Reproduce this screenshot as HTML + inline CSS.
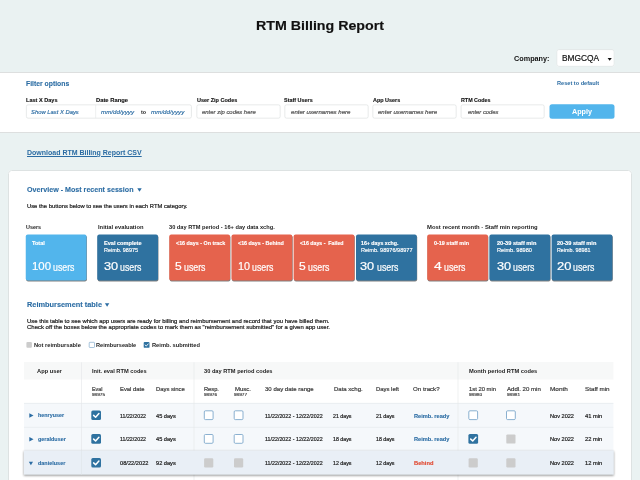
<!DOCTYPE html><html><head><meta charset="utf-8"><title>RTM Billing Report</title><style>
html,body{margin:0;padding:0}
body{width:640px;height:480px;overflow:hidden;position:relative;background:#eaf2f2;font-family:"Liberation Sans",sans-serif}
#r{position:absolute;left:0;top:0;width:640px;height:480px;overflow:hidden;will-change:transform}
#r>svg{position:absolute;left:0;top:0;display:block}
#r>span{position:absolute;white-space:pre;line-height:12px;height:12px;transform-origin:0 50%;display:block}

</style></head><body><div id="r">
<svg width="640" height="480" viewBox="0 0 640 480"><defs><filter id="b1" x="-10%" y="-20%" width="120%" height="140%"><feGaussianBlur stdDeviation="0.5"/></filter><filter id="b2" x="-5%" y="-30%" width="110%" height="160%"><feGaussianBlur stdDeviation="0.9"/></filter></defs>
<rect x="556.4" y="49.2" width="58.1" height="17.5" rx="2.5" fill="#fff"/>
<rect x="556.75" y="49.55" width="57.4" height="16.8" rx="2.15" fill="none" stroke="#d9dfdf" stroke-width="0.7"/>
<path transform="translate(607.6 58)" d="M0 0h4.2L2.1 2.8z" fill="#111" />
<rect x="0" y="72" width="640" height="61" fill="#dddfdf"/>
<rect x="0" y="73" width="640" height="59" fill="#fff"/>
<rect x="26" y="104.5" width="165.75" height="14.0" rx="2" fill="#fff"/>
<rect x="26.35" y="104.85" width="165.05" height="13.3" rx="1.65" fill="none" stroke="#dcdfdf" stroke-width="0.7"/>
<rect x="95.5" y="104.8" width="0.6" height="13.4" fill="#e3e6e6"/>
<rect x="196.5" y="104.5" width="84.0" height="14.0" rx="2" fill="#fff"/>
<rect x="196.85" y="104.85" width="83.3" height="13.3" rx="1.65" fill="none" stroke="#dcdfdf" stroke-width="0.7"/>
<rect x="284.5" y="104.5" width="84.0" height="14.0" rx="2" fill="#fff"/>
<rect x="284.85" y="104.85" width="83.3" height="13.3" rx="1.65" fill="none" stroke="#dcdfdf" stroke-width="0.7"/>
<rect x="372.5" y="104.5" width="84.0" height="14.0" rx="2" fill="#fff"/>
<rect x="372.85" y="104.85" width="83.3" height="13.3" rx="1.65" fill="none" stroke="#dcdfdf" stroke-width="0.7"/>
<rect x="460.75" y="104.5" width="83.75" height="14.0" rx="2" fill="#fff"/>
<rect x="461.1" y="104.85" width="83.05" height="13.3" rx="1.65" fill="none" stroke="#dcdfdf" stroke-width="0.7"/>
<rect x="549.5" y="104.3" width="65.0" height="14.5" rx="2.5" fill="#52b5ec"/>
<rect x="8" y="170" width="624" height="320" rx="3.5" fill="#fff"/>
<rect x="8.5" y="170.5" width="623" height="319" rx="3.0" fill="none" stroke="#dde2e2" stroke-width="1"/>
<path transform="translate(137.3 188.3)" d="M0 0h4.4L2.2 3.4z" fill="#2b6ca3" />
<rect x="26.15" y="235.4" width="60.8" height="46.1" rx="2" fill="#000" opacity="0.5" filter="url(#b1)"/>
<rect x="25.75" y="234.5" width="60.8" height="46.1" rx="2" fill="#52b5ec"/>
<rect x="97.65" y="235.4" width="60.8" height="46.1" rx="2" fill="#000" opacity="0.5" filter="url(#b1)"/>
<rect x="97.25" y="234.5" width="60.8" height="46.1" rx="2" fill="#2f72a0"/>
<rect x="169.65" y="235.4" width="60.8" height="46.1" rx="2" fill="#000" opacity="0.5" filter="url(#b1)"/>
<rect x="169.25" y="234.5" width="60.8" height="46.1" rx="2" fill="#e5634d"/>
<rect x="231.9" y="235.4" width="60.8" height="46.1" rx="2" fill="#000" opacity="0.5" filter="url(#b1)"/>
<rect x="231.5" y="234.5" width="60.8" height="46.1" rx="2" fill="#e5634d"/>
<rect x="294.0" y="235.4" width="60.8" height="46.1" rx="2" fill="#000" opacity="0.5" filter="url(#b1)"/>
<rect x="293.6" y="234.5" width="60.8" height="46.1" rx="2" fill="#e5634d"/>
<rect x="356.4" y="235.4" width="60.8" height="46.1" rx="2" fill="#000" opacity="0.5" filter="url(#b1)"/>
<rect x="356" y="234.5" width="60.8" height="46.1" rx="2" fill="#2f72a0"/>
<rect x="427.6" y="235.4" width="60.8" height="46.1" rx="2" fill="#000" opacity="0.5" filter="url(#b1)"/>
<rect x="427.2" y="234.5" width="60.8" height="46.1" rx="2" fill="#e5634d"/>
<rect x="489.8" y="235.4" width="60.8" height="46.1" rx="2" fill="#000" opacity="0.5" filter="url(#b1)"/>
<rect x="489.4" y="234.5" width="60.8" height="46.1" rx="2" fill="#2f72a0"/>
<rect x="552.0" y="235.4" width="60.8" height="46.1" rx="2" fill="#000" opacity="0.5" filter="url(#b1)"/>
<rect x="551.6" y="234.5" width="60.8" height="46.1" rx="2" fill="#2f72a0"/>
<path transform="translate(104.9 303.3)" d="M0 0h4.4L2.2 3.4z" fill="#2b6ca3" />
<rect x="26.4" y="342.0" width="5.5" height="5.7" rx="1" fill="#cccccc"/>
<rect x="88.9" y="342.0" width="5.9" height="5.8" rx="1" fill="#fff"/>
<rect x="89.2" y="342.3" width="5.3" height="5.2" rx="0.7" fill="none" stroke="#6c9cc4" stroke-width="0.6"/>
<g transform="translate(143.7 342.0) scale(0.598)"><rect width="9.7" height="9.7" rx="1.5" fill="#2f72a0"/><path d="M2.3 5 L4.3 6.8 L7.6 3.2" fill="none" stroke="#fff" stroke-width="1.5" stroke-linecap="round" stroke-linejoin="round"/></g>
<rect x="24" y="361.9" width="589.4" height="17.8" fill="#f7f8f8"/>
<rect x="24" y="379.7" width="589.4" height="23.5" fill="#fff"/>
<rect x="24" y="403.2" width="589.4" height="24.0" fill="#f5f8fb"/>
<rect x="24" y="427.2" width="589.4" height="23.3" fill="#f5f8fb"/>
<rect x="24" y="402.9" width="589.4" height="0.6" fill="#dfe5ea"/>
<rect x="24" y="426.9" width="589.4" height="0.6" fill="#e2e7ec"/>
<rect x="81.2" y="362.3" width="0.6" height="88.7" fill="#e4e7e9"/>
<rect x="193.7" y="362.3" width="0.6" height="117.7" fill="#e4e7e9"/>
<rect x="457.7" y="362.3" width="0.6" height="117.7" fill="#e4e7e9"/>
<rect x="23.8" y="451.4" width="590.0" height="24.3" rx="0" fill="#000" opacity="0.42" filter="url(#b2)"/>
<rect x="23.8" y="450.4" width="590.0" height="24.3" fill="#e9eff6"/>
<rect x="81.2" y="450.4" width="0.6" height="24.3" fill="#dfe5ea"/>
<path transform="translate(29.3 413.3)" d="M0 0v4.4L4.2 2.2z" fill="#2b6ca3" />
<g transform="translate(91.3 410.4) scale(1.0)"><rect width="9.7" height="9.7" rx="1.5" fill="#2f72a0"/><path d="M2.3 5 L4.3 6.8 L7.6 3.2" fill="none" stroke="#fff" stroke-width="1.5" stroke-linecap="round" stroke-linejoin="round"/></g>
<rect x="203.9" y="410.40000000000003" width="9.6" height="9.6" rx="1.5" fill="#fff"/>
<rect x="204.3" y="410.8" width="8.8" height="8.8" rx="1.1" fill="none" stroke="#6c9cc4" stroke-width="0.8"/>
<rect x="233.8" y="410.40000000000003" width="9.6" height="9.6" rx="1.5" fill="#fff"/>
<rect x="234.2" y="410.8" width="8.8" height="8.8" rx="1.1" fill="none" stroke="#6c9cc4" stroke-width="0.8"/>
<rect x="468.4" y="410.40000000000003" width="9.6" height="9.6" rx="1.5" fill="#fff"/>
<rect x="468.8" y="410.8" width="8.8" height="8.8" rx="1.1" fill="none" stroke="#6c9cc4" stroke-width="0.8"/>
<rect x="506.1" y="410.40000000000003" width="9.6" height="9.6" rx="1.5" fill="#fff"/>
<rect x="506.5" y="410.8" width="8.8" height="8.8" rx="1.1" fill="none" stroke="#6c9cc4" stroke-width="0.8"/>
<path transform="translate(29.3 437.0)" d="M0 0v4.4L4.2 2.2z" fill="#2b6ca3" />
<g transform="translate(91.3 434.1) scale(1.0)"><rect width="9.7" height="9.7" rx="1.5" fill="#2f72a0"/><path d="M2.3 5 L4.3 6.8 L7.6 3.2" fill="none" stroke="#fff" stroke-width="1.5" stroke-linecap="round" stroke-linejoin="round"/></g>
<rect x="203.9" y="434.1" width="9.6" height="9.6" rx="1.5" fill="#fff"/>
<rect x="204.3" y="434.5" width="8.8" height="8.8" rx="1.1" fill="none" stroke="#6c9cc4" stroke-width="0.8"/>
<rect x="233.8" y="434.1" width="9.6" height="9.6" rx="1.5" fill="#fff"/>
<rect x="234.2" y="434.5" width="8.8" height="8.8" rx="1.1" fill="none" stroke="#6c9cc4" stroke-width="0.8"/>
<g transform="translate(468.4 434.1) scale(1.0)"><rect width="9.7" height="9.7" rx="1.5" fill="#2f72a0"/><path d="M2.3 5 L4.3 6.8 L7.6 3.2" fill="none" stroke="#fff" stroke-width="1.5" stroke-linecap="round" stroke-linejoin="round"/></g>
<rect x="506.3" y="434.4" width="9.2" height="9.2" rx="1.2" fill="#cccccc"/>
<path transform="translate(28.8 461.7)" d="M0 0h4.2L2.1 3.6z" fill="#2b6ca3" />
<g transform="translate(91.3 457.9) scale(1.0)"><rect width="9.7" height="9.7" rx="1.5" fill="#2f72a0"/><path d="M2.3 5 L4.3 6.8 L7.6 3.2" fill="none" stroke="#fff" stroke-width="1.5" stroke-linecap="round" stroke-linejoin="round"/></g>
<rect x="204.1" y="458.2" width="9.2" height="9.2" rx="1.2" fill="#cccccc"/>
<rect x="234.0" y="458.2" width="9.2" height="9.2" rx="1.2" fill="#cccccc"/>
<rect x="468.59999999999997" y="458.2" width="9.2" height="9.2" rx="1.2" fill="#cccccc"/>
<rect x="506.3" y="458.2" width="9.2" height="9.2" rx="1.2" fill="#cccccc"/>
</svg>
<span style="left:256.3px;top:20.2px;font-size:12.5px;color:#111;font-weight:700;-webkit-text-stroke:0.15px #111;transform:scaleX(1.1378);">RTM Billing Report</span>
<span style="left:513.75px;top:52.5px;font-size:7px;color:#111;font-weight:700;transform:scaleX(1.0370);">Company:</span>
<span style="left:561.6px;top:52.1px;font-size:9.8px;color:#111;-webkit-text-stroke:0.2px #111;transform:scaleX(0.8520);">BMGCQA</span>
<span style="left:26px;top:77.75px;font-size:7px;color:#2b6ca3;font-weight:700;-webkit-text-stroke:0.1px #2b6ca3;transform:scaleX(0.9753);">Filter options</span>
<span style="left:556.5px;top:77px;font-size:5.5px;color:#2b6ca3;font-weight:700;transform:scaleX(1.0178);">Reset to default</span>
<span style="left:26px;top:94px;font-size:5.5px;color:#111;font-weight:700;-webkit-text-stroke:0.12px #111;transform:scaleX(1.0100);">Last X Days</span>
<span style="left:96px;top:94px;font-size:5.5px;color:#111;font-weight:700;-webkit-text-stroke:0.12px #111;transform:scaleX(1.0573);">Date Range</span>
<span style="left:196.75px;top:94px;font-size:5.5px;color:#111;font-weight:700;-webkit-text-stroke:0.12px #111;transform:scaleX(0.9977);">User Zip Codes</span>
<span style="left:284.25px;top:94px;font-size:5.5px;color:#111;font-weight:700;-webkit-text-stroke:0.12px #111;transform:scaleX(0.9898);">Staff Users</span>
<span style="left:372.75px;top:94px;font-size:5.5px;color:#111;font-weight:700;-webkit-text-stroke:0.12px #111;transform:scaleX(0.9903);">App Users</span>
<span style="left:461px;top:94px;font-size:5.5px;color:#111;font-weight:700;-webkit-text-stroke:0.12px #111;transform:scaleX(0.9752);">RTM Codes</span>
<span style="left:572px;top:105.5px;font-size:7px;color:#fff;font-weight:700;transform:scaleX(1.0281);">Apply</span>
<span style="left:31.25px;top:106px;font-size:5.5px;color:#2b6ca3;font-style:italic;-webkit-text-stroke:0.14px #2b6ca3;transform:scaleX(1.0626);">Show Last X Days</span>
<span style="left:100.75px;top:106px;font-size:5.5px;color:#2b6ca3;font-style:italic;-webkit-text-stroke:0.14px #2b6ca3;transform:scaleX(1.1246);">mm/dd/yyyy</span>
<span style="left:140.5px;top:106px;font-size:5.5px;color:#222;font-weight:700;transform:scaleX(0.9802);">to</span>
<span style="left:151px;top:106px;font-size:5.5px;color:#2b6ca3;font-style:italic;-webkit-text-stroke:0.14px #2b6ca3;transform:scaleX(1.1331);">mm/dd/yyyy</span>
<span style="left:202px;top:106px;font-size:5.5px;color:#555;font-style:italic;-webkit-text-stroke:0.2px #555;transform:scaleX(1.0784);">enter zip codes here</span>
<span style="left:290.5px;top:106px;font-size:5.5px;color:#555;font-style:italic;-webkit-text-stroke:0.2px #555;transform:scaleX(1.1057);">enter usernames here</span>
<span style="left:378.25px;top:106px;font-size:5.5px;color:#555;font-style:italic;-webkit-text-stroke:0.2px #555;transform:scaleX(1.1010);">enter usernames here</span>
<span style="left:467.5px;top:106px;font-size:5.5px;color:#555;font-style:italic;-webkit-text-stroke:0.2px #555;transform:scaleX(1.0609);">enter codes</span>
<span style="left:26.5px;top:146.8px;font-size:7px;color:#2b6ca3;font-weight:700;text-decoration:underline;text-decoration-thickness:0.5px;text-underline-offset:0.9px;transform:scaleX(0.9998);">Download RTM Billing Report CSV</span>
<span style="left:26.5px;top:183.5px;font-size:7px;color:#2b6ca3;font-weight:700;-webkit-text-stroke:0.1px #2b6ca3;transform:scaleX(1.0176);">Overview - Most recent session</span>
<span style="left:26.5px;top:200px;font-size:5.5px;color:#222;-webkit-text-stroke:0.2px #222;transform:scaleX(1.0598);">Use the buttons below to see the users in each RTM category.</span>
<span style="left:26px;top:221px;font-size:5.5px;color:#222;font-weight:700;transform:scaleX(0.9806);">Users</span>
<span style="left:97.5px;top:221px;font-size:5.5px;color:#222;font-weight:700;transform:scaleX(1.0558);">Initial evaluation</span>
<span style="left:169.25px;top:221px;font-size:5.5px;color:#222;font-weight:700;transform:scaleX(1.0281);">30 day RTM period - 16+ day data xchg.</span>
<span style="left:427.2px;top:221px;font-size:5.5px;color:#222;font-weight:700;transform:scaleX(1.0709);">Most recent month - Staff min reporting</span>
<span style="left:32.25px;top:237px;font-size:5.3px;color:#fff;font-weight:700;-webkit-text-stroke:0.15px #fff;transform:scaleX(1.0395);">Total</span>
<span style="left:31.85px;top:260.1px;font-size:11.4px;color:#fff;-webkit-text-stroke:0.2px #fff;transform:scaleX(1.0018);">100</span>
<span style="left:53.1px;top:260.7px;font-size:10.6px;color:#fff;-webkit-text-stroke:0.2px #fff;transform:scaleX(0.8299);">users</span>
<span style="left:104px;top:237px;font-size:5.3px;color:#fff;font-weight:700;-webkit-text-stroke:0.15px #fff;transform:scaleX(1.0526);">Eval complete</span>
<span style="left:104px;top:244px;font-size:5.3px;color:#fff;-webkit-text-stroke:0.15px #fff;transform:scaleX(1.0308);">Reimb. 98975</span>
<span style="left:103.6px;top:260.1px;font-size:11.4px;color:#fff;-webkit-text-stroke:0.2px #fff;transform:scaleX(1.1206);">30</span>
<span style="left:120.0px;top:260.7px;font-size:10.6px;color:#fff;-webkit-text-stroke:0.2px #fff;transform:scaleX(0.8299);">users</span>
<span style="left:175.5px;top:237px;font-size:5.3px;color:#fff;font-weight:700;-webkit-text-stroke:0.15px #fff;transform:scaleX(1.0106);">&lt;16 days - On track</span>
<span style="left:175.1px;top:260.1px;font-size:11.4px;color:#fff;-webkit-text-stroke:0.2px #fff;transform:scaleX(1.0562);">5</span>
<span style="left:184.0px;top:260.7px;font-size:10.6px;color:#fff;-webkit-text-stroke:0.2px #fff;transform:scaleX(0.8299);">users</span>
<span style="left:238px;top:237px;font-size:5.3px;color:#fff;font-weight:700;-webkit-text-stroke:0.15px #fff;transform:scaleX(1.0124);">&lt;16 days - Behind</span>
<span style="left:237.6px;top:260.1px;font-size:11.4px;color:#fff;-webkit-text-stroke:0.2px #fff;transform:scaleX(0.9470);">10</span>
<span style="left:251.79999999999998px;top:260.7px;font-size:10.6px;color:#fff;-webkit-text-stroke:0.2px #fff;transform:scaleX(0.8299);">users</span>
<span style="left:299.5px;top:237px;font-size:5.3px;color:#fff;font-weight:700;-webkit-text-stroke:0.15px #fff;transform:scaleX(0.9883);">&lt;16 days -  Failed</span>
<span style="left:299.1px;top:260.1px;font-size:11.4px;color:#fff;-webkit-text-stroke:0.2px #fff;transform:scaleX(1.0562);">5</span>
<span style="left:308.0px;top:260.7px;font-size:10.6px;color:#fff;-webkit-text-stroke:0.2px #fff;transform:scaleX(0.8299);">users</span>
<span style="left:360.5px;top:237px;font-size:5.3px;color:#fff;font-weight:700;-webkit-text-stroke:0.15px #fff;transform:scaleX(0.9909);">16+ days xchg.</span>
<span style="left:360.5px;top:244px;font-size:5.3px;color:#fff;-webkit-text-stroke:0.15px #fff;transform:scaleX(1.0470);">Reimb. 98976/98977</span>
<span style="left:360.1px;top:260.1px;font-size:11.4px;color:#fff;-webkit-text-stroke:0.2px #fff;transform:scaleX(1.1206);">30</span>
<span style="left:376.5px;top:260.7px;font-size:10.6px;color:#fff;-webkit-text-stroke:0.2px #fff;transform:scaleX(0.8299);">users</span>
<span style="left:434.4px;top:237px;font-size:5.3px;color:#fff;font-weight:700;-webkit-text-stroke:0.15px #fff;transform:scaleX(1.0247);">0-19 staff min</span>
<span style="left:434.0px;top:260.1px;font-size:11.4px;color:#fff;-webkit-text-stroke:0.2px #fff;transform:scaleX(1.2296);">4</span>
<span style="left:444.0px;top:260.7px;font-size:10.6px;color:#fff;-webkit-text-stroke:0.2px #fff;transform:scaleX(0.8299);">users</span>
<span style="left:496.9px;top:237px;font-size:5.3px;color:#fff;font-weight:700;-webkit-text-stroke:0.15px #fff;transform:scaleX(1.0608);">20-39 staff min</span>
<span style="left:496.9px;top:244px;font-size:5.3px;color:#fff;-webkit-text-stroke:0.15px #fff;transform:scaleX(1.0611);">Reimb. 98980</span>
<span style="left:496.5px;top:260.1px;font-size:11.4px;color:#fff;-webkit-text-stroke:0.2px #fff;transform:scaleX(1.1206);">30</span>
<span style="left:512.9px;top:260.7px;font-size:10.6px;color:#fff;-webkit-text-stroke:0.2px #fff;transform:scaleX(0.8299);">users</span>
<span style="left:556.9px;top:237px;font-size:5.3px;color:#fff;font-weight:700;-webkit-text-stroke:0.15px #fff;transform:scaleX(1.0608);">20-39 staff min</span>
<span style="left:556.9px;top:244px;font-size:5.3px;color:#fff;-webkit-text-stroke:0.15px #fff;transform:scaleX(1.0126);">Reimb. 98981</span>
<span style="left:556.5px;top:260.1px;font-size:11.4px;color:#fff;-webkit-text-stroke:0.2px #fff;transform:scaleX(1.1364);">20</span>
<span style="left:573.1px;top:260.7px;font-size:10.6px;color:#fff;-webkit-text-stroke:0.2px #fff;transform:scaleX(0.8299);">users</span>
<span style="left:26.5px;top:299.4px;font-size:7px;color:#2b6ca3;font-weight:700;-webkit-text-stroke:0.1px #2b6ca3;transform:scaleX(1.0536);">Reimbursement table</span>
<span style="left:26.5px;top:315.25px;font-size:5.5px;color:#222;-webkit-text-stroke:0.2px #222;transform:scaleX(1.0790);">Use this table to see which app users are ready for billing and reimbursement and record that you have billed them.</span>
<span style="left:26.5px;top:321.4px;font-size:5.5px;color:#222;-webkit-text-stroke:0.2px #222;transform:scaleX(1.0862);">Check off the boxes below the appropriate codes to mark them as "reimbursement submitted" for a given app user.</span>
<span style="left:34.4px;top:339px;font-size:5.5px;color:#222;font-weight:700;transform:scaleX(1.0357);">Not reimbursable</span>
<span style="left:96.25px;top:339px;font-size:5.5px;color:#222;font-weight:700;transform:scaleX(1.0206);">Reimburseable</span>
<span style="left:151.5px;top:339px;font-size:5.5px;color:#222;font-weight:700;transform:scaleX(1.0378);">Reimb. submitted</span>
<span style="left:37.4px;top:365.1px;font-size:5.5px;color:#222;font-weight:700;transform:scaleX(1.0401);">App user</span>
<span style="left:91.6px;top:365.1px;font-size:5.5px;color:#222;font-weight:700;transform:scaleX(1.0345);">Init. eval RTM codes</span>
<span style="left:204.1px;top:365.1px;font-size:5.5px;color:#222;font-weight:700;transform:scaleX(1.0327);">30 day RTM period codes</span>
<span style="left:468.7px;top:365.1px;font-size:5.5px;color:#222;font-weight:700;transform:scaleX(1.0395);">Month period RTM codes</span>
<span style="left:91.6px;top:382.9px;font-size:5.3px;color:#3a3a3a;-webkit-text-stroke:0.18px #3a3a3a;transform:scaleX(1.0085);">Eval</span>
<span style="left:91.6px;top:388.6px;font-size:4.2px;color:#3a3a3a;-webkit-text-stroke:0.15px #3a3a3a;transform:scaleX(1.1239);">98975</span>
<span style="left:120px;top:382.9px;font-size:5.3px;color:#3a3a3a;-webkit-text-stroke:0.18px #3a3a3a;transform:scaleX(1.1089);">Eval date</span>
<span style="left:155.7px;top:382.9px;font-size:5.3px;color:#3a3a3a;-webkit-text-stroke:0.18px #3a3a3a;transform:scaleX(1.1117);">Days since</span>
<span style="left:204.1px;top:382.9px;font-size:5.3px;color:#3a3a3a;-webkit-text-stroke:0.18px #3a3a3a;transform:scaleX(1.0763);">Resp.</span>
<span style="left:204.1px;top:388.6px;font-size:4.2px;color:#3a3a3a;-webkit-text-stroke:0.15px #3a3a3a;transform:scaleX(1.1239);">98976</span>
<span style="left:234.5px;top:382.9px;font-size:5.3px;color:#3a3a3a;-webkit-text-stroke:0.18px #3a3a3a;transform:scaleX(1.1315);">Musc.</span>
<span style="left:234.3px;top:388.6px;font-size:4.2px;color:#3a3a3a;-webkit-text-stroke:0.15px #3a3a3a;transform:scaleX(1.1239);">98977</span>
<span style="left:265px;top:382.9px;font-size:5.3px;color:#3a3a3a;-webkit-text-stroke:0.18px #3a3a3a;transform:scaleX(1.1412);">30 day date range</span>
<span style="left:333.5px;top:382.9px;font-size:5.3px;color:#3a3a3a;-webkit-text-stroke:0.18px #3a3a3a;transform:scaleX(1.1331);">Data xchg.</span>
<span style="left:376px;top:382.9px;font-size:5.3px;color:#3a3a3a;-webkit-text-stroke:0.18px #3a3a3a;transform:scaleX(1.1160);">Days left</span>
<span style="left:413.2px;top:382.9px;font-size:5.3px;color:#3a3a3a;-webkit-text-stroke:0.18px #3a3a3a;transform:scaleX(1.1581);">On track?</span>
<span style="left:468.7px;top:382.9px;font-size:5.3px;color:#3a3a3a;-webkit-text-stroke:0.18px #3a3a3a;transform:scaleX(1.1049);">1st 20 min</span>
<span style="left:468.7px;top:388.6px;font-size:4.2px;color:#3a3a3a;-webkit-text-stroke:0.15px #3a3a3a;transform:scaleX(1.1239);">98980</span>
<span style="left:506.7px;top:382.9px;font-size:5.3px;color:#3a3a3a;-webkit-text-stroke:0.18px #3a3a3a;transform:scaleX(1.1476);">Addl. 20 min</span>
<span style="left:506.7px;top:388.6px;font-size:4.2px;color:#3a3a3a;-webkit-text-stroke:0.15px #3a3a3a;transform:scaleX(1.1239);">98981</span>
<span style="left:550px;top:382.9px;font-size:5.3px;color:#3a3a3a;-webkit-text-stroke:0.18px #3a3a3a;transform:scaleX(1.2081);">Month</span>
<span style="left:584.7px;top:382.9px;font-size:5.3px;color:#3a3a3a;-webkit-text-stroke:0.18px #3a3a3a;transform:scaleX(1.1820);">Staff min</span>
<span style="left:37.7px;top:409.3px;font-size:5.5px;color:#2b6ca3;font-weight:700;-webkit-text-stroke:0.1px #2b6ca3;transform:scaleX(0.9790);">henryuser</span>
<span style="left:120px;top:410.2px;font-size:5.3px;color:#222;-webkit-text-stroke:0.2px #222;transform:scaleX(0.9952);">11/22/2022</span>
<span style="left:156px;top:410.2px;font-size:5.3px;color:#222;-webkit-text-stroke:0.2px #222;transform:scaleX(1.0613);">45 days</span>
<span style="left:265px;top:410.2px;font-size:5.3px;color:#222;-webkit-text-stroke:0.2px #222;transform:scaleX(1.0045);">11/22/2022 - 12/22/2022</span>
<span style="left:333.3px;top:410.2px;font-size:5.3px;color:#222;-webkit-text-stroke:0.2px #222;transform:scaleX(0.9966);">21 days</span>
<span style="left:376px;top:410.2px;font-size:5.3px;color:#222;-webkit-text-stroke:0.2px #222;transform:scaleX(0.9966);">21 days</span>
<span style="left:413.5px;top:410.2px;font-size:5.5px;color:#2b6ca3;font-weight:700;-webkit-text-stroke:0.12px #2b6ca3;transform:scaleX(1.0247);">Reimb. ready</span>
<span style="left:550px;top:410.2px;font-size:5.3px;color:#222;-webkit-text-stroke:0.2px #222;transform:scaleX(1.0579);">Nov 2022</span>
<span style="left:584.7px;top:410.2px;font-size:5.3px;color:#222;-webkit-text-stroke:0.2px #222;transform:scaleX(1.0876);">41 min</span>
<span style="left:37.7px;top:433.0px;font-size:5.5px;color:#2b6ca3;font-weight:700;-webkit-text-stroke:0.1px #2b6ca3;transform:scaleX(0.9884);">geralduser</span>
<span style="left:120px;top:433.2px;font-size:5.3px;color:#222;-webkit-text-stroke:0.2px #222;transform:scaleX(0.9952);">11/22/2022</span>
<span style="left:156px;top:433.2px;font-size:5.3px;color:#222;-webkit-text-stroke:0.2px #222;transform:scaleX(1.0613);">45 days</span>
<span style="left:265px;top:433.2px;font-size:5.3px;color:#222;-webkit-text-stroke:0.2px #222;transform:scaleX(1.0045);">11/22/2022 - 12/22/2022</span>
<span style="left:333.3px;top:433.2px;font-size:5.3px;color:#222;-webkit-text-stroke:0.2px #222;transform:scaleX(0.9966);">18 days</span>
<span style="left:376px;top:433.2px;font-size:5.3px;color:#222;-webkit-text-stroke:0.2px #222;transform:scaleX(0.9966);">18 days</span>
<span style="left:413.5px;top:433.2px;font-size:5.5px;color:#2b6ca3;font-weight:700;-webkit-text-stroke:0.12px #2b6ca3;transform:scaleX(1.0247);">Reimb. ready</span>
<span style="left:550px;top:433.2px;font-size:5.3px;color:#222;-webkit-text-stroke:0.2px #222;transform:scaleX(1.0579);">Nov 2022</span>
<span style="left:584.7px;top:433.2px;font-size:5.3px;color:#222;-webkit-text-stroke:0.2px #222;transform:scaleX(1.0876);">22 min</span>
<span style="left:37.7px;top:456.8px;font-size:5.5px;color:#2b6ca3;font-weight:700;-webkit-text-stroke:0.1px #2b6ca3;transform:scaleX(0.9922);">danieluser</span>
<span style="left:120px;top:457.2px;font-size:5.3px;color:#222;-webkit-text-stroke:0.2px #222;transform:scaleX(1.0748);">08/22/2022</span>
<span style="left:156px;top:457.2px;font-size:5.3px;color:#222;-webkit-text-stroke:0.2px #222;transform:scaleX(1.0613);">92 days</span>
<span style="left:265px;top:457.2px;font-size:5.3px;color:#222;-webkit-text-stroke:0.2px #222;transform:scaleX(1.0045);">11/22/2022 - 12/22/2022</span>
<span style="left:333.3px;top:457.2px;font-size:5.3px;color:#222;-webkit-text-stroke:0.2px #222;transform:scaleX(0.9966);">12 days</span>
<span style="left:376px;top:457.2px;font-size:5.3px;color:#222;-webkit-text-stroke:0.2px #222;transform:scaleX(0.9966);">12 days</span>
<span style="left:413.5px;top:457.2px;font-size:5.5px;color:#e0452c;font-weight:700;-webkit-text-stroke:0.12px #e0452c;transform:scaleX(1.0461);">Behind</span>
<span style="left:550px;top:457.2px;font-size:5.3px;color:#222;-webkit-text-stroke:0.2px #222;transform:scaleX(1.0579);">Nov 2022</span>
<span style="left:584.7px;top:457.2px;font-size:5.3px;color:#222;-webkit-text-stroke:0.2px #222;transform:scaleX(1.0876);">12 min</span>
</div></body></html>
